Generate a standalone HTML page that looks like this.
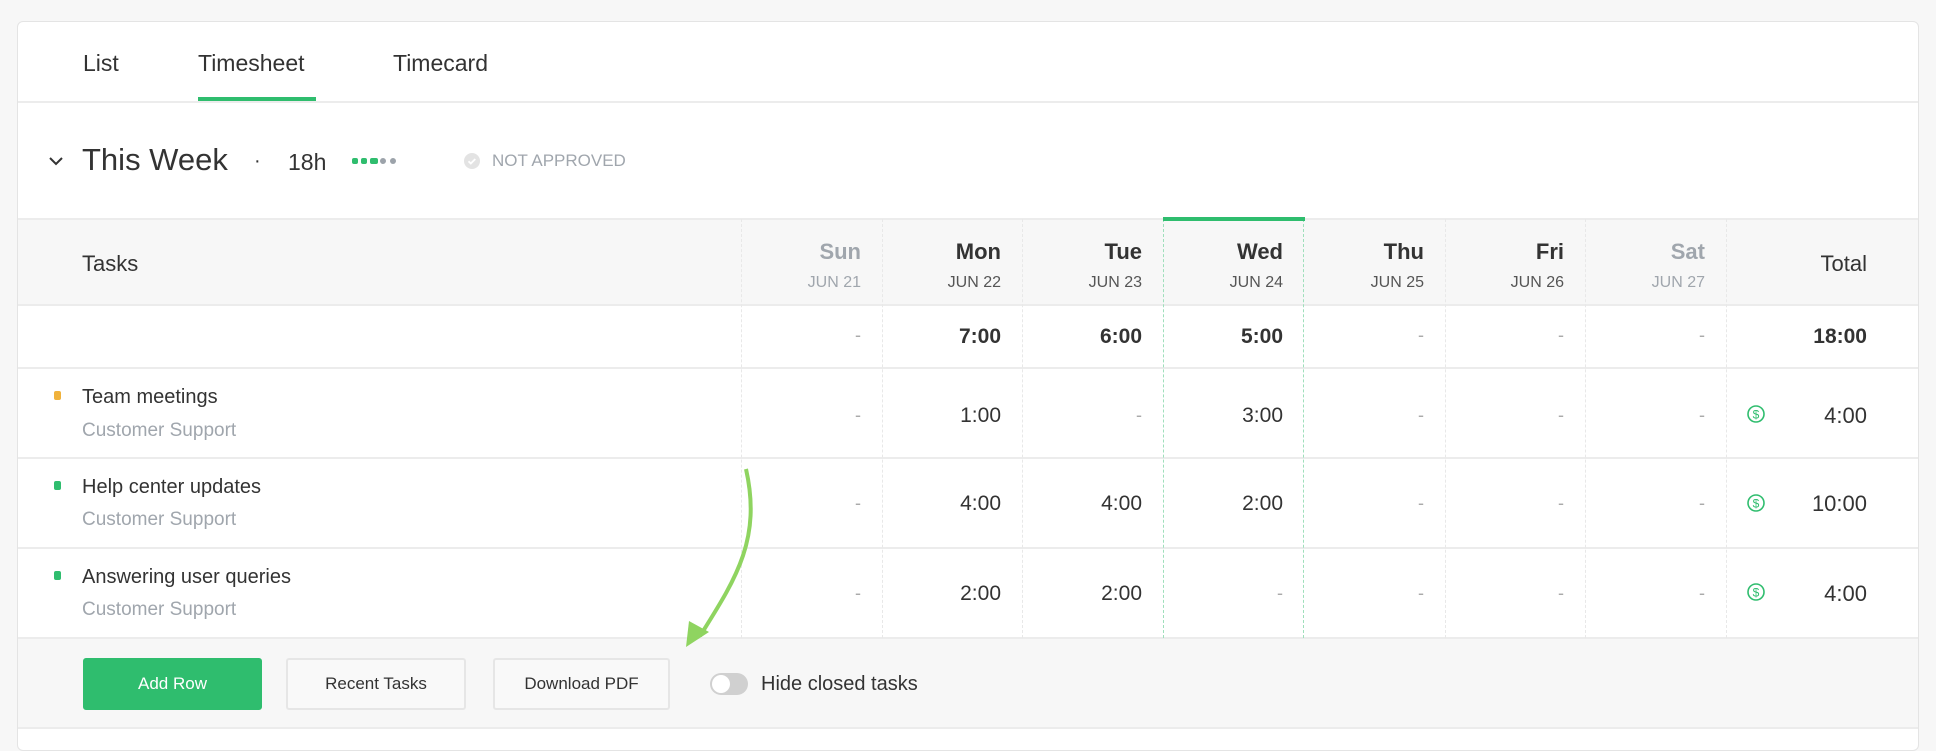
<!DOCTYPE html>
<html><head><meta charset="utf-8"><style>
*{margin:0;padding:0;box-sizing:border-box}
body{width:1936px;height:742px;background:#f7f7f7;font-family:"Liberation Sans",sans-serif;color:#333;position:relative;overflow:hidden}
.a{position:absolute;white-space:nowrap}
.card{position:absolute;left:17px;top:21px;width:1902px;height:730px;background:#fff;border:1px solid #e4e4e4;border-radius:6px}
.hl{position:absolute;left:18px;width:1900px;height:2px;background:#ececec}
.vl{position:absolute;top:219px;height:419px;border-left:1px dashed #e8e8e8}
.r{position:absolute;text-align:right;width:120px;white-space:nowrap}
.day{font-size:22px;font-weight:bold;top:239px}
.dt{font-size:16px;color:#555;top:274px}
.v{font-size:21px;color:#333}
.d{color:#aaa;font-size:18px}
.btn{position:absolute;top:658px;height:52px;border:2px solid #e6e6e6;border-radius:3px;background:#f9f9f9;font-size:17px;color:#333;text-align:center;line-height:48px}
</style></head><body>
<div class="card"></div>
<div class="a" style="left:83px;top:50px;font-size:23px;color:#333">List</div>
<div class="a" style="left:198px;top:50px;font-size:23px;color:#333">Timesheet</div>
<div class="a" style="left:393px;top:50px;font-size:23px;color:#333">Timecard</div>
<div class="a" style="left:198px;top:97px;width:118px;height:5px;background:#2fbd6e"></div>
<div class="hl" style="top:101px"></div>

<svg class="a" style="left:48px;top:155px" width="16" height="12"><path d="M2 3l6 6 6-6" stroke="#333" stroke-width="2" fill="none"/></svg>
<div class="a" style="left:82px;top:142px;font-size:31px;color:#333">This Week</div>
<div class="a" style="left:254px;top:150px;font-size:20px">·</div>
<div class="a" style="left:288px;top:149px;font-size:23px">18h</div>
<div class="a" style="left:352px;top:158px;width:6px;height:6px;border-radius:2px;background:#2fbd6e"></div>
<div class="a" style="left:361px;top:158px;width:6px;height:6px;border-radius:2px;background:#2fbd6e"></div>
<div class="a" style="left:370px;top:158px;width:8px;height:6px;border-radius:2px;background:#2fbd6e"></div>
<div class="a" style="left:380px;top:158px;width:6px;height:6px;border-radius:3px;background:#9ca3aa"></div>
<div class="a" style="left:390px;top:158px;width:6px;height:6px;border-radius:3px;background:#9ca3aa"></div>
<svg class="a" style="left:463px;top:152px" width="18" height="18"><circle cx="9" cy="9" r="8" fill="#e3e3e3"/><path d="M5.5 9.3l2.3 2.2 4.5-4.5" stroke="#fff" stroke-width="1.8" fill="none"/></svg>
<div class="a" style="left:492px;top:151px;font-size:17px;color:#a0a6ad">NOT APPROVED</div>

<div class="a" style="left:18px;top:219px;width:1900px;height:86px;background:#f7f7f7"></div>
<div class="hl" style="top:218px"></div>
<div class="hl" style="top:304px"></div>
<div class="hl" style="top:367px"></div>
<div class="hl" style="top:457px"></div>
<div class="hl" style="top:547px"></div>
<div class="a" style="left:18px;top:638px;width:1900px;height:90px;background:#f7f7f7"></div>
<div class="hl" style="top:637px"></div>
<div class="hl" style="top:727px"></div>
<div class="a" style="left:1163px;top:219px;width:141px;height:419px;border-left:1px dashed #9fdfbb;border-right:1px dashed #9fdfbb"></div>
<div class="a" style="left:1163px;top:217px;width:142px;height:4px;background:#2fbd6e"></div>
<div class="vl" style="left:741px"></div><div class="vl" style="left:882px"></div><div class="vl" style="left:1022px"></div>
<div class="vl" style="left:1445px"></div><div class="vl" style="left:1585px"></div><div class="vl" style="left:1726px"></div>

<div class="a" style="left:82px;top:251px;font-size:22px">Tasks</div>
<div class="r day" style="left:741px;width:120px;color:#a0a6ad">Sun</div><div class="r dt" style="left:741px;color:#a0a6ad">JUN 21</div>
<div class="r day" style="left:881px">Mon</div><div class="r dt" style="left:881px">JUN 22</div>
<div class="r day" style="left:1022px">Tue</div><div class="r dt" style="left:1022px">JUN 23</div>
<div class="r day" style="left:1163px">Wed</div><div class="r dt" style="left:1163px">JUN 24</div>
<div class="r day" style="left:1304px">Thu</div><div class="r dt" style="left:1304px">JUN 25</div>
<div class="r day" style="left:1444px">Fri</div><div class="r dt" style="left:1444px">JUN 26</div>
<div class="r day" style="left:1585px;color:#a0a6ad">Sat</div><div class="r dt" style="left:1585px;color:#a0a6ad">JUN 27</div>
<div class="r" style="left:1747px;top:251px;font-size:22px">Total</div>

<div class="r d" style="left:741px;top:325px">-</div>
<div class="r v" style="left:881px;top:325px;font-weight:bold">7:00</div>
<div class="r v" style="left:1022px;top:325px;font-weight:bold">6:00</div>
<div class="r v" style="left:1163px;top:325px;font-weight:bold">5:00</div>
<div class="r d" style="left:1304px;top:325px">-</div>
<div class="r d" style="left:1444px;top:325px">-</div>
<div class="r d" style="left:1585px;top:325px">-</div>
<div class="r v" style="left:1747px;top:325px;font-weight:bold">18:00</div>

<div class="a" style="left:54px;top:391px;width:7px;height:9px;border-radius:2px;background:#f0b23c"></div>
<div class="a" style="left:82px;top:386px;font-size:20px">Team meetings</div>
<div class="a" style="left:82px;top:420px;font-size:19px;color:#a0a6ad">Customer Support</div>
<div class="a" style="left:54px;top:481px;width:7px;height:9px;border-radius:2px;background:#2fbd6e"></div>
<div class="a" style="left:82px;top:476px;font-size:20px">Help center updates</div>
<div class="a" style="left:82px;top:509px;font-size:19px;color:#a0a6ad">Customer Support</div>
<div class="a" style="left:54px;top:571px;width:7px;height:9px;border-radius:2px;background:#2fbd6e"></div>
<div class="a" style="left:82px;top:566px;font-size:20px">Answering user queries</div>
<div class="a" style="left:82px;top:599px;font-size:19px;color:#a0a6ad">Customer Support</div>

<div class="r d" style="left:741px;top:405px">-</div><div class="r v" style="left:881px;top:404px">1:00</div><div class="r d" style="left:1022px;top:405px">-</div><div class="r v" style="left:1163px;top:404px">3:00</div><div class="r d" style="left:1304px;top:405px">-</div><div class="r d" style="left:1444px;top:405px">-</div><div class="r d" style="left:1585px;top:405px">-</div><div class="r v" style="left:1747px;top:403px;font-size:22px">4:00</div>
<div class="r d" style="left:741px;top:493px">-</div><div class="r v" style="left:881px;top:492px">4:00</div><div class="r v" style="left:1022px;top:492px">4:00</div><div class="r v" style="left:1163px;top:492px">2:00</div><div class="r d" style="left:1304px;top:493px">-</div><div class="r d" style="left:1444px;top:493px">-</div><div class="r d" style="left:1585px;top:493px">-</div><div class="r v" style="left:1747px;top:491px;font-size:22px">10:00</div>
<div class="r d" style="left:741px;top:583px">-</div><div class="r v" style="left:881px;top:582px">2:00</div><div class="r v" style="left:1022px;top:582px">2:00</div><div class="r d" style="left:1163px;top:583px">-</div><div class="r d" style="left:1304px;top:583px">-</div><div class="r d" style="left:1444px;top:583px">-</div><div class="r d" style="left:1585px;top:583px">-</div><div class="r v" style="left:1747px;top:581px;font-size:22px">4:00</div>

<svg class="a" style="left:1746px;top:404px" width="20" height="20"><circle cx="10" cy="10" r="8" stroke="#2fbd6e" stroke-width="1.6" fill="none"/><text x="10" y="14.5" font-size="12" text-anchor="middle" fill="#2fbd6e" font-family="Liberation Sans">$</text></svg>
<svg class="a" style="left:1746px;top:493px" width="20" height="20"><circle cx="10" cy="10" r="8" stroke="#2fbd6e" stroke-width="1.6" fill="none"/><text x="10" y="14.5" font-size="12" text-anchor="middle" fill="#2fbd6e" font-family="Liberation Sans">$</text></svg>
<svg class="a" style="left:1746px;top:582px" width="20" height="20"><circle cx="10" cy="10" r="8" stroke="#2fbd6e" stroke-width="1.6" fill="none"/><text x="10" y="14.5" font-size="12" text-anchor="middle" fill="#2fbd6e" font-family="Liberation Sans">$</text></svg>

<div class="btn" style="left:83px;width:179px;background:#2fbd6e;border-color:#2fbd6e;color:#fff">Add Row</div>
<div class="btn" style="left:286px;width:180px">Recent Tasks</div>
<div class="btn" style="left:493px;width:177px">Download PDF</div>
<div class="a" style="left:710px;top:673px;width:38px;height:22px;border-radius:11px;background:#d0d0d0"></div>
<div class="a" style="left:712px;top:675px;width:18px;height:18px;border-radius:9px;background:#fff"></div>
<div class="a" style="left:761px;top:673px;font-size:20px">Hide closed tasks</div>

<svg class="a" style="left:0;top:0" width="1936" height="742"><path d="M746 469 C762 540 735 580 700 636" stroke="#8fd460" stroke-width="4" fill="none"/><path d="M686 647 L689 621 L709 632 Z" fill="#8fd460"/></svg>
</body></html>
